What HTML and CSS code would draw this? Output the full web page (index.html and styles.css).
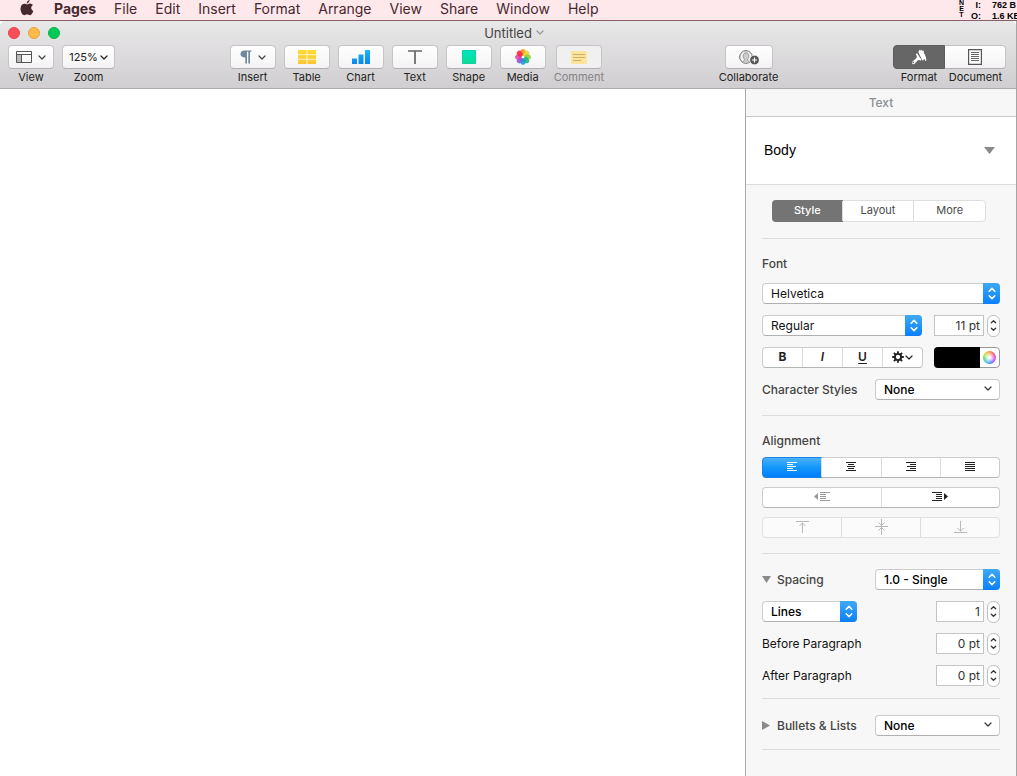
FILE: index.html
```html
<!DOCTYPE html>
<html lang="en">

<head>
  <meta charset="UTF-8">
  <meta name="viewport" content="width=device-width, initial-scale=1.0">
  <title>Pages - Untitled</title>
  <link rel="stylesheet" href="styles.css">
</head>

<body>
  <!-- shared icons -->
  <svg class="defs" aria-hidden="true">
    <defs>
      <linearGradient id="blue" x1="0" y1="0" x2="0" y2="1">
        <stop offset="0" stop-color="#1eb8f5" />
        <stop offset="1" stop-color="#0a86ee" />
      </linearGradient>
      <linearGradient id="green" x1="0" y1="0" x2="0" y2="1">
        <stop offset="0" stop-color="#00e5c0" />
        <stop offset="1" stop-color="#0bdc93" />
      </linearGradient>
      <linearGradient id="yellow" x1="0" y1="0" x2="0" y2="1">
        <stop offset="0" stop-color="#fddc35" />
        <stop offset="1" stop-color="#fcc436" />
      </linearGradient>
    </defs>
    <symbol id="chevron" viewBox="0 0 8 5">
      <path d="M1 1l3 3 3-3" fill="none" stroke="currentColor" stroke-width="1.2" stroke-linecap="round" stroke-linejoin="round" />
    </symbol>
    <symbol id="updown" viewBox="0 0 8 13">
      <path d="M1.2 4.2L4 1.4l2.8 2.8M1.2 8.8L4 11.6l2.8-2.8" fill="none" stroke="currentColor" stroke-width="1.5" stroke-linecap="round" stroke-linejoin="round" />
    </symbol>
    <symbol id="step" viewBox="0 0 7 13">
      <path d="M1.300 3.800l2.200-2 2.200 2M1.300 9.200l2.200 2 2.200-2" fill="none" stroke="currentColor" stroke-width="1.300" stroke-linecap="round" stroke-linejoin="round" />
    </symbol>
  </svg>

  <header class="menubar">
    <nav class="menus">
      <a href="#" class="apple" aria-label="Apple menu">
        <svg width="14" height="16" viewBox="0 0 14 16">
          <path fill="currentColor" d="M9.6 0c.1 1.800-1.300 3.300-2.900 3.400C6.500 1.700 8.100.2 9.600 0zM7.100 4.400c.7 0 1.600-.9 3-.8 1.200.1 2.200.6 2.800 1.500-2.500 1.500-2 4.900.5 5.900-.6 1.700-2 4.200-3.300 4.300-1 .1-1.500-.7-2.900-.7s-1.900.7-2.900.7C2.500 15.300.5 12 .5 8.800c0-3.200 1.900-5.100 4-5.100 1.200 0 1.900.7 2.600.7z" />
        </svg>
      </a>
      <a href="#" class="app-name">Pages</a>
      <a href="#">File</a>
      <a href="#">Edit</a>
      <a href="#">Insert</a>
      <a href="#">Format</a>
      <a href="#">Arrange</a>
      <a href="#">View</a>
      <a href="#">Share</a>
      <a href="#">Window</a>
      <a href="#">Help</a>
    </nav>
    <div class="net">
      <div class="net-name"><span>N</span><span>E</span><span>T</span></div>
      <div class="net-dir"><span>I:</span><span>O:</span></div>
      <div class="net-rate"><span>762 B</span><span>1.6 KB</span></div>
    </div>
  </header>

  <div class="window">
    <div class="chrome">
      <div class="titlebar">
        <div class="lights">
          <button class="light close" aria-label="Close"></button>
          <button class="light minimize" aria-label="Minimize"></button>
          <button class="light zoom" aria-label="Full screen"></button>
        </div>
        <button class="title">Untitled <svg width="8" height="5"><use href="#chevron" /></svg></button>
      </div>

      <div class="toolbar">
        <div class="tools">
          <label class="tool">
            <button class="tool-btn">
              <svg width="16" height="12" viewBox="0 0 16 12">
                <path fill="#bbb" d="M1 4h4v7H1z" />
                <path d="M.5.5h15v11H.5zM.5 3.500h15M5.500 3.500v8" fill="none" stroke="#555" />
              </svg>
              <svg class="drop" width="8" height="5"><use href="#chevron" /></svg>
            </button>
            <span>View</span>
          </label>
          <label class="tool">
            <button class="tool-btn percent">125%<svg width="8" height="5"><use href="#chevron" /></svg></button>
            <span>Zoom</span>
          </label>
        </div>

        <div class="tools">
          <label class="tool">
            <button class="tool-btn">
              <svg width="12" height="14" viewBox="0 0 12 14">
                <path fill="#71899c" d="M4.500.5H11.500v1.300H10V13.500H8.300V1.800H7V13.500H5.300V7.500C2.300 7.500.5 6 .5 4S2.200.5 4.500.5z" />
              </svg>
              <svg class="drop" width="8" height="5"><use href="#chevron" /></svg>
            </button>
            <span>Insert</span>
          </label>
          <label class="tool">
            <button class="tool-btn">
              <svg width="18" height="14" viewBox="0 0 18 14">
                <path fill="url(#yellow)" d="M0 0h18v14H0z" />
                <path d="M9 0v14M0 4.700h18M0 9.300h18" stroke="#fff5c8" fill="none" />
              </svg>
            </button>
            <span>Table</span>
          </label>
          <label class="tool">
            <button class="tool-btn">
              <svg width="18" height="14" viewBox="0 0 18 14">
                <path fill="url(#blue)" d="M0 8.500h5V14H0zM6.500 4.500h5V14h-5zM13 0h5v14h-5z" />
              </svg>
            </button>
            <span>Chart</span>
          </label>
          <label class="tool">
            <button class="tool-btn">
              <svg width="14" height="14" viewBox="0 0 14 14">
                <path d="M0 1h14M7 1v13" stroke="#666" stroke-width="1.700" fill="none" />
              </svg>
            </button>
            <span>Text</span>
          </label>
          <label class="tool">
            <button class="tool-btn">
              <svg width="14" height="14" viewBox="0 0 14 14">
                <path fill="url(#green)" stroke="#10cfa0" d="M.5.5h13v13H.5z" />
              </svg>
            </button>
            <span>Shape</span>
          </label>
          <label class="tool">
            <button class="tool-btn">
              <svg width="16" height="16" viewBox="-8 -8 16 16">
                <g fill-opacity=".88">
                  <ellipse cy="-4.600" rx="2.600" ry="3.300" fill="#ff9018" />
                  <ellipse cy="-4.600" rx="2.600" ry="3.300" fill="#e5d52c" transform="rotate(45)" />
                  <ellipse cy="-4.600" rx="2.600" ry="3.300" fill="#87cf3a" transform="rotate(90)" />
                  <ellipse cy="-4.600" rx="2.600" ry="3.300" fill="#17b877" transform="rotate(135)" />
                  <ellipse cy="-4.600" rx="2.600" ry="3.300" fill="#0e9ce0" transform="rotate(180)" />
                  <ellipse cy="-4.600" rx="2.600" ry="3.300" fill="#8354d8" transform="rotate(225)" />
                  <ellipse cy="-4.600" rx="2.600" ry="3.300" fill="#e341a8" transform="rotate(270)" />
                  <ellipse cy="-4.600" rx="2.600" ry="3.300" fill="#fb2337" transform="rotate(315)" />
                </g>
              </svg>
            </button>
            <span>Media</span>
          </label>
          <label class="tool disabled">
            <button class="tool-btn" disabled>
              <svg width="16" height="13" viewBox="0 0 16 13">
                <path fill="#fce49a" d="M0 0h16v13H0z" />
                <path d="M2 3.500h12M2 6.500h12M2 9.500h8" stroke="#c9b06c" fill="none" />
              </svg>
            </button>
            <span>Comment</span>
          </label>
        </div>

        <div class="tools">
          <label class="tool">
            <button class="tool-btn collab">
              <svg width="20" height="15" viewBox="0 0 20 15">
                <circle cx="7" cy="7" r="6.300" fill="#f4f4f4" stroke="#666" />
                <path d="M4 12.300c0-1.500 1.500-1.500 1.500-3C4.300 8 4 6.800 4.200 5.300 4.400 3.700 5.400 2.800 7 2.800s2.600.9 2.800 2.500C10 6.800 9.700 8 8.500 9.300c0 1.500 1.500 1.500 1.500 3" fill="#ccc" stroke="#888" stroke-width=".8" />
                <circle cx="15.500" cy="10" r="4.800" fill="#555" stroke="#fff" stroke-width=".7" />
                <path d="M13 10h5M15.500 7.500v5" stroke="#fff" stroke-width="1.200" />
              </svg>
            </button>
            <span>Collaborate</span>
          </label>
        </div>

        <div class="tools joined">
          <label class="tool">
            <button class="tool-btn active">
              <svg width="18" height="16" viewBox="0 0 18 16">
                <path fill="#fff" d="M8.300 2.900L9.800.6l1 1.200 1-1.100.8 1.300 1.300-.2-.2 1.600 1.200 2.300c1 2 1.400 3.400 1.400 5.300 0 1.200-1.300 1.300-1.500.1-.2-1.200-.8-1.500-1.200-.4-.4 1-1.100.9-1.500.4z" />
                <path fill="#fff" d="M6.900 4l-.9 1.300 1 2.600-1 1.600c-.9 1-2.600 1.800-3.600 3-1.200 1.500.3 3.300 1.900 2.400 1.400-.9 2-2.400 3.300-3.500l1.400-.5 1.600.6 1-.6z" />
                <circle cx="3.300" cy="13.400" r=".8" fill="#666" />
              </svg>
            </button>
            <span>Format</span>
          </label>
          <label class="tool wide">
            <button class="tool-btn">
              <svg width="14" height="16" viewBox="0 0 14 16">
                <path d="M.6.600h12.800v14.800H.6z" fill="#fff" stroke="#555" stroke-width="1.200" />
                <path d="M3 3.500h8M3 5.500h8M3 7.500h8M3 9.500h8M3 11.500h8" stroke="#666" fill="none" />
              </svg>
            </button>
            <span>Document</span>
          </label>
        </div>
      </div>
    </div>

    <div class="content">
      <main class="canvas"></main>

      <aside class="inspector">
        <h2 class="inspector-title">Text</h2>
        <button class="paragraph-style">Body <svg width="11" height="7" viewBox="0 0 11 7"><path d="M0 0h11L5.500 7z" fill="#8a8a8a" /></svg></button>

        <section class="tabs-row">
          <div class="segments tabs">
            <button class="active">Style</button>
            <button>Layout</button>
            <button>More</button>
          </div>
        </section>

        <section class="font">
          <h3>Font</h3>
          <div class="row">
            <div class="select fill">
              <select aria-label="Font family"><option>Helvetica</option></select>
              <span class="cap"><svg width="8" height="13"><use href="#updown" /></svg></span>
            </div>
          </div>
          <div class="row">
            <div class="select fill">
              <select aria-label="Typeface"><option>Regular</option></select>
              <span class="cap"><svg width="8" height="13"><use href="#updown" /></svg></span>
            </div>
            <div class="number size">
              <input type="text" value="11 pt" aria-label="Font size">
              <button class="stepper" aria-label="Change font size"><svg width="7" height="13"><use href="#step" /></svg></button>
            </div>
          </div>
          <div class="row">
            <div class="segments fill">
              <button class="bold">B</button>
              <button class="italic">I</button>
              <button class="underline">U</button>
              <button class="gear" aria-label="Advanced options">
                <svg width="12" height="12" viewBox="-6 -6 12 12">
                  <g fill="none" stroke="#222">
                    <circle r="3.100" stroke-width="1.900" />
                    <path d="M0-3.500v-2.300M0 3.500v2.300M-3.500 0h-2.300M3.500 0h2.300M2.500-2.500l1.600-1.600M2.500 2.500l1.600 1.600M-2.500 2.500l-1.600 1.600M-2.500-2.500l-1.600-1.600" stroke-width="1.800" />
                  </g>
                </svg>
                <svg width="8" height="5"><use href="#chevron" /></svg>
              </button>
            </div>
            <button class="color" aria-label="Text color"><span class="swatch"></span><span class="wheel"></span></button>
          </div>
          <div class="row">
            <label class="strong" for="char-styles">Character Styles</label>
            <div class="select half">
              <select id="char-styles" class="medium"><option>None</option></select>
              <svg class="caret" width="8" height="5"><use href="#chevron" /></svg>
            </div>
          </div>
        </section>

        <section class="alignment">
          <h3>Alignment</h3>
          <div class="segments">
            <button class="selected" aria-label="Align left"><svg width="10" height="10" viewBox="0 0 10 10"><path d="M0 .5h10M0 2.500h6M0 4.500h9M0 6.500h6M0 8.500h10" stroke="currentColor" /></svg></button>
            <button aria-label="Center"><svg width="10" height="10" viewBox="0 0 10 10"><path d="M0 .5h10M2 2.500h6M1 4.500h8M2 6.500h6M0 8.500h10" stroke="currentColor" /></svg></button>
            <button aria-label="Align right"><svg width="10" height="10" viewBox="0 0 10 10"><path d="M0 .5h10M4 2.500h6M1 4.500h9M4 6.500h6M0 8.500h10" stroke="currentColor" /></svg></button>
            <button aria-label="Justify"><svg width="10" height="10" viewBox="0 0 10 10"><path d="M0 .5h10M0 2.500h10M0 4.500h10M0 6.500h10M0 8.500h10" stroke="currentColor" /></svg></button>
          </div>
          <div class="segments">
            <button class="dim" aria-label="Decrease indent"><svg width="16" height="10" viewBox="0 0 16 10"><path d="M6 .5h10M6 2.500h6M6 4.500h6M6 6.500h6M6 8.500h10" stroke="currentColor" /><path d="M4 1v7L0 4.500z" fill="currentColor" /></svg></button>
            <button aria-label="Increase indent"><svg width="16" height="10" viewBox="0 0 16 10"><path d="M0 .5h10M4 2.500h6M4 4.500h6M4 6.500h6M0 8.500h10" stroke="currentColor" /><path d="M12 1v7l4-3.500z" fill="currentColor" /></svg></button>
          </div>
          <div class="segments disabled">
            <button disabled aria-label="Align top"><svg width="13" height="12" viewBox="0 0 13 12"><path d="M0 .5h13M6.500 1.500V12M3.500 5l3-3 3 3" fill="none" stroke="currentColor" /></svg></button>
            <button disabled aria-label="Align middle"><svg width="13" height="16" viewBox="0 0 13 16"><path d="M0 7.500h13M6.500 0v16M3.500 3.500l3 3 3-3M3.500 11.500l3-3 3 3" fill="none" stroke="currentColor" /></svg></button>
            <button disabled aria-label="Align bottom"><svg width="13" height="12" viewBox="0 0 13 12"><path d="M0 11.500h13M6.500 0v10.500M3.500 7l3 3 3-3" fill="none" stroke="currentColor" /></svg></button>
          </div>
        </section>

        <section class="spacing">
          <div class="row">
            <button class="disclosure"><svg width="9" height="9" viewBox="0 0 9 9"><path d="M0 1h9L4.500 8z" fill="#8a8a8a" /></svg>Spacing</button>
            <div class="select half">
              <select aria-label="Line spacing" class="medium"><option>1.0 - Single</option></select>
              <span class="cap"><svg width="8" height="13"><use href="#updown" /></svg></span>
            </div>
          </div>
          <div class="row">
            <div class="select lines">
              <select aria-label="Spacing unit" class="medium"><option>Lines</option></select>
              <span class="cap"><svg width="8" height="13"><use href="#updown" /></svg></span>
            </div>
            <div class="number">
              <input type="text" value="1" aria-label="Lines">
              <button class="stepper" aria-label="Change lines"><svg width="7" height="13"><use href="#step" /></svg></button>
            </div>
          </div>
          <div class="row">
            <label for="before">Before Paragraph</label>
            <div class="number">
              <input type="text" id="before" value="0 pt">
              <button class="stepper" aria-label="Change space before"><svg width="7" height="13"><use href="#step" /></svg></button>
            </div>
          </div>
          <div class="row">
            <label for="after">After Paragraph</label>
            <div class="number">
              <input type="text" id="after" value="0 pt">
              <button class="stepper" aria-label="Change space after"><svg width="7" height="13"><use href="#step" /></svg></button>
            </div>
          </div>
        </section>

        <section class="bullets">
          <div class="row">
            <button class="disclosure"><svg width="9" height="9" viewBox="0 0 9 9"><path d="M0 0v9l8-4.500z" fill="#8a8a8a" /></svg>Bullets &amp; Lists</button>
            <div class="select half">
              <select aria-label="List style" class="medium"><option>None</option></select>
              <svg class="caret" width="8" height="5"><use href="#chevron" /></svg>
            </div>
          </div>
        </section>
      </aside>
    </div>
  </div>
</body>

</html>
```
FILE: styles.css
```css
* {
  margin: 0;
  padding: 0;
  box-sizing: border-box;
}

body {
  display: flex;
  flex-direction: column;
  min-height: 100vh;
  font-family: Inter, Roboto, sans-serif;
  font-size: 12px;
  line-height: 16px;
  color: #111;
  background-color: #fff;
  overflow-x: hidden;
}

button,
input,
select {
  font: inherit;
  color: inherit;
  border: none;
  outline: none;
  background: none;
}

svg {
  display: block;
  flex: none;
}

.defs {
  position: absolute;
  width: 0;
  height: 0;
}

/* menu bar */

.menubar {
  display: flex;
  justify-content: space-between;
  height: 21px;
  padding-left: 20px;
  background-color: #ffe8ec;
  border-bottom: 1px solid #8c5f68;
  overflow: hidden;
}

.menus {
  display: flex;
  gap: 18px;
}

.menus a {
  color: #45292f;
  font-size: 14px;
  line-height: 18px;
  text-decoration: none;
}

.menus .apple {
  padding-right: 2px;
}

.menus .app-name {
  font-weight: 700;
}

.net {
  display: flex;
  font-family: "Liberation Sans", Arial, sans-serif;
  font-size: 9px;
  font-weight: 700;
  color: #000;
  white-space: nowrap;
}

.net-name,
.net-dir,
.net-rate {
  display: flex;
  flex-direction: column;
  text-align: right;
  line-height: 11px;
}

.net-name {
  font-size: 7px;
  line-height: 6px;
  text-align: center;
}

.net-dir {
  width: 17px;
}

.net-rate {
  width: 36px;
  padding-left: 11px;
  text-align: left;
}

/* window */

.window {
  display: flex;
  flex-direction: column;
  flex: 1;
  border-right: 1px solid #a5a5a5;
}

.chrome {
  background-image: linear-gradient(to bottom, #e9e8e9, #d0ced0);
  border-bottom: 1px solid #aeacae;
  border-top-left-radius: 5px;
  border-top-right-radius: 5px;
}

.titlebar {
  display: grid;
  grid-template-columns: 1fr auto 1fr;
  align-items: center;
  height: 23px;
  padding: 0 8px;
}

.lights {
  display: flex;
  gap: 8px;
}

.light {
  width: 12px;
  height: 12px;
  border-radius: 50%;
}

.close {
  background-color: #fc4e57;
  border: 1px solid #e9434c;
}

.minimize {
  background-color: #fdb949;
  border: 1px solid #e8a23b;
}

.zoom {
  background-color: #00c955;
  border: 1px solid #00b54c;
}

.title {
  display: flex;
  align-items: center;
  gap: 4px;
  padding-left: 12px;
  color: #444;
  font-size: 13px;
}

.title svg {
  color: #999;
}

.toolbar {
  display: flex;
  justify-content: space-between;
  padding: 1px 10px 3px 8px;
}

.tools {
  display: flex;
  gap: 8px;
}

.tool {
  display: flex;
  flex-direction: column;
  align-items: center;
  min-width: 46px;
  color: #222;
  font-size: 11px;
}

.tool-btn {
  display: flex;
  align-items: center;
  justify-content: center;
  width: 46px;
  height: 24px;
  color: #444;
  background-image: linear-gradient(to bottom, #fff, #f3f3f3);
  border: 1px solid #c6c4c6;
  border-bottom-color: #b3b1b3;
  border-radius: 4px;
}

.tool-btn .drop {
  margin-left: 6px;
}

.percent {
  width: 53px;
  gap: 2px;
  color: #222;
}

.collab {
  width: 48px;
}

.disabled {
  color: #858385;
}

.disabled .tool-btn {
  background-image: none;
  background-color: #f1f0f1;
}

.joined {
  gap: 0;
}

.joined .tool-btn {
  width: 52px;
  border-radius: 4px 0 0 4px;
}

.joined .wide .tool-btn {
  width: 61px;
  border-left: none;
  border-radius: 0 4px 4px 0;
}

.joined .active {
  background-image: none;
  background-color: #666;
  border-color: #5c5c5c;
}

.content {
  display: flex;
  flex: 1;
}

.canvas {
  flex: 1;
  background-color: #fff;
}

/* inspector */

.inspector {
  width: 271px;
  background-color: #f7f7f7;
  border-left: 1px solid #a9a9a9;
}

.inspector-title {
  height: 28px;
  color: #8a8f94;
  font-size: 12px;
  font-weight: 500;
  line-height: 27px;
  text-align: center;
  border-bottom: 1px solid #c4c8cc;
}

.paragraph-style {
  display: flex;
  align-items: center;
  justify-content: space-between;
  width: 100%;
  height: 68px;
  padding: 0 21px 1px 18px;
  color: #000;
  font-family: "Liberation Sans", Arial, sans-serif;
  font-size: 14px;
  background-color: #fff;
  border-bottom: 1px solid #dcdcdc;
}

.inspector section {
  display: flex;
  flex-direction: column;
  margin: 0 16px;
  border-bottom: 1px solid #dcdcdc;
}

.inspector .tabs-row {
  padding: 15px 14px 16px 10px;
}

.inspector .font {
  gap: 11px;
  padding: 17px 0 15px;
}

.inspector .alignment {
  gap: 9px;
  padding: 18px 0 15px;
}

.inspector .spacing {
  gap: 11px;
  padding: 15px 0 12px;
}

.inspector .bullets {
  padding: 16px 0 13px;
}

h3,
.strong,
.disclosure {
  color: #444;
  font-size: 12px;
  font-weight: 500;
}

.alignment h3 {
  line-height: 14px;
}

.row {
  display: flex;
  align-items: center;
  justify-content: space-between;
  height: 21px;
}

.fill {
  flex: 1;
}

.segments {
  display: flex;
  height: 21px;
  background-color: #fff;
  border: 1px solid #ccc;
  border-bottom-color: #b5b5b5;
  border-radius: 4px;
}

.segments button {
  display: flex;
  flex: 1;
  align-items: center;
  justify-content: center;
  padding-bottom: 1px;
  color: #222;
}

.segments button + button {
  border-left: 1px solid #dcdcdc;
}

.segments .gear {
  gap: 1px;
}

.segments .dim {
  color: #999;
}

.segments.disabled {
  background-color: #fbfbfb;
  border-color: #e0e0e0;
}

.segments.disabled button {
  color: #b8b8b8;
}

.segments .selected {
  margin: -1px;
  color: #fff;
  background-image: linear-gradient(to bottom, #4cb2f8, #1297fb 50%, #007dfb);
  border: 1px solid #1785e8;
  border-radius: 4px 0 0 4px;
}

.tabs {
  height: 22px;
  border-color: #dedede;
}

.segments.tabs button {
  padding-bottom: 2px;
  color: #4a4a4a;
  font-size: 11px;
}

.segments.tabs .active {
  margin: -1px;
  color: #fff;
  font-weight: 500;
  background-color: #747474;
  border-radius: 4px 0 0 4px;
}

.segments .bold {
  font-weight: 700;
}

.segments .italic {
  font-style: italic;
  font-weight: 600;
}

.segments .underline {
  font-weight: 600;
  text-decoration: underline;
  text-underline-offset: 2px;
}

.select {
  position: relative;
  height: 21px;
}

.select select {
  width: 100%;
  height: 21px;
  padding: 0 24px 0 8px;
  appearance: none;
  background-color: #fff;
  border: 1px solid #ccc;
  border-bottom-color: #b0b0b0;
  border-radius: 4px;
}

.half {
  width: 125px;
}

.lines {
  width: 95px;
}

.select .medium {
  color: #000;
  font-weight: 500;
}

/* arrows drawn over the select box */
.cap {
  position: absolute;
  top: 0;
  right: 0;
  display: flex;
  align-items: center;
  justify-content: center;
  width: 17px;
  height: 21px;
  color: #fff;
  background-image: linear-gradient(to bottom, #3fa9f8, #0a7ffb);
  border-radius: 0 4px 4px 0;
  pointer-events: none;
}

.caret {
  position: absolute;
  top: 7px;
  right: 8px;
  color: #333;
  pointer-events: none;
}

.number {
  display: flex;
  align-items: center;
  justify-content: space-between;
  width: 64px;
}

.number input {
  width: 48px;
  height: 21px;
  padding-right: 3px;
  color: #333;
  text-align: right;
  background-color: #fff;
  border: 1px solid #c4c4c4;
}

.size {
  width: 66px;
  margin-left: 12px;
}

.size input {
  width: 50px;
}

.stepper {
  display: flex;
  align-items: center;
  justify-content: center;
  width: 13px;
  height: 22px;
  color: #333;
  background-color: #fff;
  border: 1px solid #c0c0c0;
  border-radius: 6px;
}

.color {
  display: flex;
  width: 66px;
  height: 21px;
  margin-left: 11px;
  background-color: #fff;
  border: 1px solid #999;
  border-radius: 4px;
}

.swatch {
  width: 46px;
  height: 21px;
  margin: -1px 0 0 -1px;
  background-color: #000;
  border-radius: 4px 0 0 4px;
}

.wheel {
  width: 13px;
  height: 13px;
  margin: 3px;
  background-image: radial-gradient(circle, #fff 10%, rgba(255, 255, 255, 0) 70%), conic-gradient(#ff8a3c, #ff3f78, #d03ff5, #5c60f5, #30bde8, #40dc6a, #c4e030, #ff8a3c);
  border-radius: 50%;
}

.disclosure {
  display: flex;
  align-items: center;
  gap: 6px;
}
```
